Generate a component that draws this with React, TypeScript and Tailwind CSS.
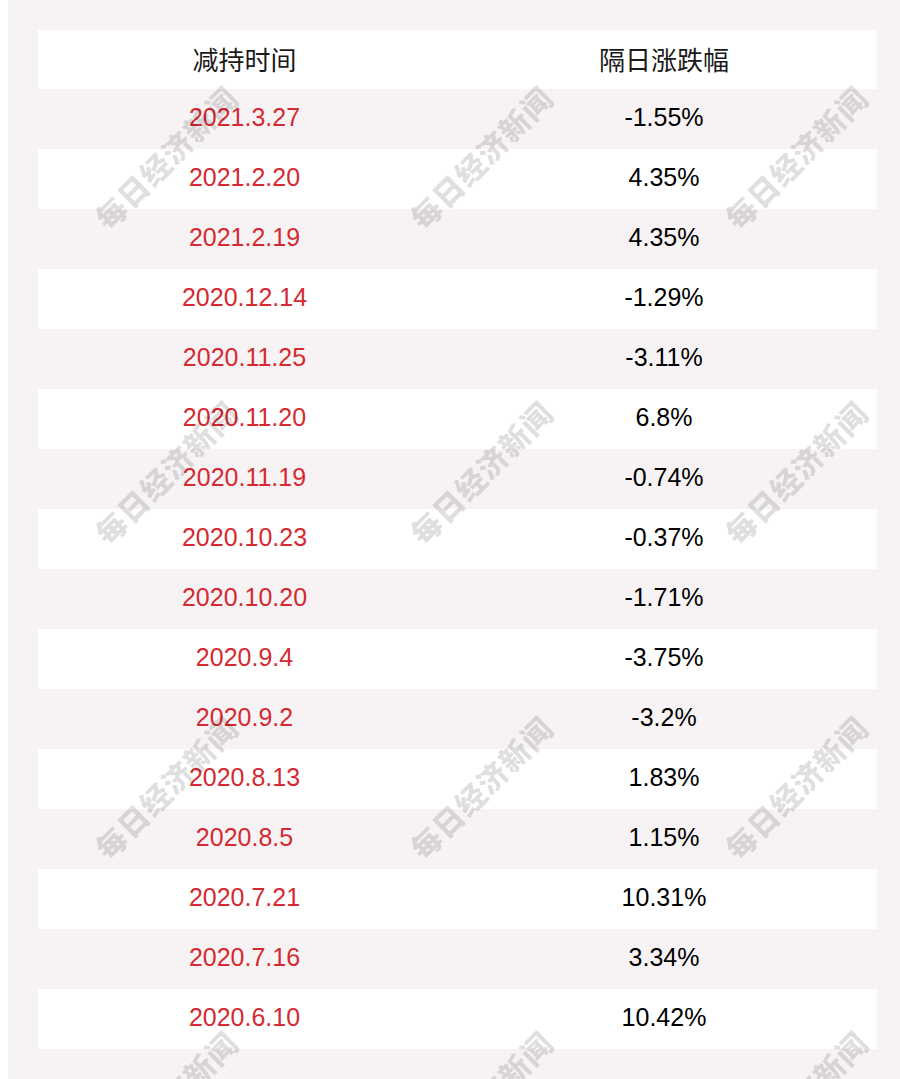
const rows: [string, string][] = [
  ['2021.3.27', '-1.55%'],
  ['2021.2.20', '4.35%'],
  ['2021.2.19', '4.35%'],
  ['2020.12.14', '-1.29%'],
  ['2020.11.25', '-3.11%'],
  ['2020.11.20', '6.8%'],
  ['2020.11.19', '-0.74%'],
  ['2020.10.23', '-0.37%'],
  ['2020.10.20', '-1.71%'],
  ['2020.9.4', '-3.75%'],
  ['2020.9.2', '-3.2%'],
  ['2020.8.13', '1.83%'],
  ['2020.8.5', '1.15%'],
  ['2020.7.21', '10.31%'],
  ['2020.7.16', '3.34%'],
  ['2020.6.10', '10.42%'],
]

const cjk = "font-['Noto_Sans_CJK_SC',sans-serif]"
const num = "font-['Liberation_Sans','Noto_Sans_CJK_SC',sans-serif]"

export default function App() {
  return (
    <div className="bg-white w-[900px] h-[1079px] overflow-hidden">
      <div className="relative ml-2 w-[892px] h-[1079px] bg-[#f7f3f4] pt-[30px] pl-[30px]">
        <div className="w-[839px]">
          <div className={`flex h-[59px] bg-white items-center pb-[3px] text-[26px] text-[#1a1a1a] ${cjk}`}>
            <div className="w-[413px] text-center">减持时间</div>
            <div className="flex-1 text-center">隔日涨跌幅</div>
          </div>
          {rows.map(([date, pct], i) => (
            <div
              key={date}
              className={`flex h-[60px] items-center pb-[2px] text-[25px] ${num} ${i % 2 === 1 ? 'bg-white' : ''}`}
            >
              <div className="w-[413px] text-center text-[#d52a31]">{date}</div>
              <div className="flex-1 text-center text-black">{pct}</div>
            </div>
          ))}
        </div>

        {/* watermark overlay */}
        <div className="absolute inset-0 pointer-events-none grid grid-cols-[repeat(3,315px)] auto-rows-[315px]">
          {Array.from({ length: 12 }).map((_, i) => (
            <div key={i} className="flex items-center justify-center">
              <span
                className={`-rotate-45 whitespace-nowrap text-[30px] font-black tracking-[1px] text-black/[0.13] ${cjk}`}
              >
                每日经济新闻
              </span>
            </div>
          ))}
        </div>
      </div>
    </div>
  )
}
